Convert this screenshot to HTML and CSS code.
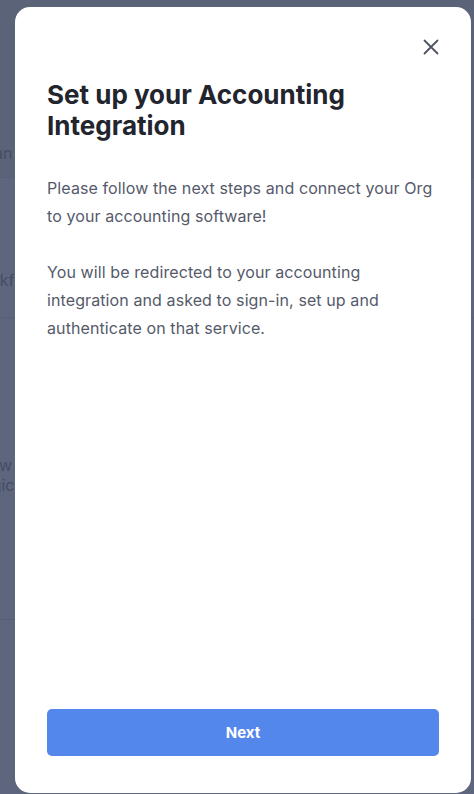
FILE: index.html
```html
<!DOCTYPE html>
<html lang="en">
<head>
<meta charset="utf-8">
<title>Set up your Accounting Integration</title>
<link rel="stylesheet" href="styles.css">
</head>
<body>
<div class="page">
  <div class="row row-top"><span class="ghost ghost-a">Plan</span></div>
  <div class="row row-item"><span class="ghost ghost-b">Workfl</span></div>
  <div class="row row-two"><span class="ghost ghost-c">New</span><span class="ghost ghost-d">Logic</span></div>
  <div class="row row-rest"></div>
</div>

<div class="modal" role="dialog" aria-labelledby="modal-title">
  <div class="modal-head">
    <button class="close" aria-label="Close">
      <svg viewBox="0 0 16 16" width="16" height="16" aria-hidden="true">
        <path d="M1.5 1.5 L14.5 14.5 M14.5 1.5 L1.5 14.5" stroke="#4f5464" stroke-width="1.8" stroke-linecap="round" fill="none"/>
      </svg>
    </button>
  </div>
  <h1 id="modal-title" class="title">Set up your Accounting Integration</h1>
  <p class="text">Please follow the next steps and connect your Org to your accounting software!</p>
  <p class="text">You will be redirected to your accounting integration and asked to sign-in, set up and authenticate on that service.</p>
  <button class="next">Next</button>
</div>
</body>
</html>
```

FILE: styles.css
```css
* { box-sizing: border-box; }

html, body {
  margin: 0;
  padding: 0;
  height: 100%;
}

body {
  background: #5e667d;
  font-family: "Inter", "Noto Sans", "Liberation Sans", sans-serif;
  overflow: hidden;
}

.page {
  width: 474px;
  height: 794px;
  display: flex;
  flex-direction: column;
}

.row {
  border-bottom: 1px solid #566076;
  display: flex;
  flex-direction: column;
  justify-content: flex-start;
  overflow: hidden;
}

.row-top { height: 178px; padding-top: 143px; background: #5b6379; }
.row-item { height: 140px; padding-top: 92px; }
.row-two { height: 302px; padding-top: 137px; }
.row-rest { flex: 1; border: none; }

.ghost {
  color: #474c62;
  font-size: 16px;
  line-height: 20px;
  white-space: nowrap;
}

.ghost-a { margin-left: -20px; }
.ghost-b { margin-left: -31px; }
.ghost-c { margin-left: -22px; }
.ghost-d { margin-left: -27px; }

.modal {
  position: absolute;
  left: 15px;
  top: 7px;
  width: 456px;
  height: 786px;
  background: #ffffff;
  border-radius: 15px;
  padding: 32px 32px 37px 32px;
  display: flex;
  flex-direction: column;
}

.modal-head {
  display: flex;
  justify-content: flex-end;
  height: 16px;
}

.close {
  width: 16px;
  height: 16px;
  padding: 0;
  border: none;
  background: none;
  display: flex;
  cursor: pointer;
}

.title {
  margin: 24px 0 0;
  font-size: 26px;
  line-height: 31px;
  font-weight: 700;
  color: #22252e;
  letter-spacing: 0;
}

.text {
  margin: 33px 0 0;
  font-size: 16px;
  line-height: 28px;
  color: #555a6a;
  letter-spacing: 0.1px;
}

.text + .text { margin-top: 28px; }

.next {
  margin-top: auto;
  height: 47px;
  width: 100%;
  border: none;
  border-radius: 5px;
  background: #5487ec;
  color: #ffffff;
  font-family: inherit;
  font-size: 15px;
  font-weight: 700;
  cursor: pointer;
}
```
